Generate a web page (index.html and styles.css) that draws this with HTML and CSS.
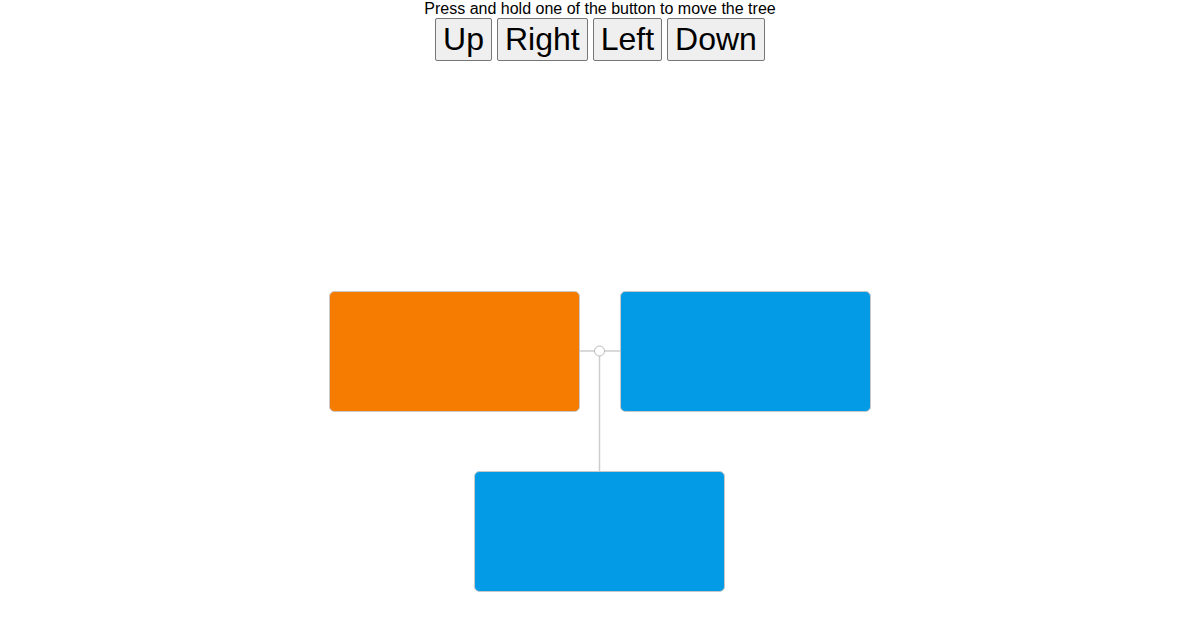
FILE: index.html
```html
<!DOCTYPE html>
<html>
<head>
<meta charset="utf-8">
<link rel="stylesheet" href="styles.css">
</head>
<body>
<div class="controls">
  <div class="hint">Press and hold one of the button to move the tree</div>
  <div class="buttons">
    <button class="btn">Up</button>
    <button class="btn">Right</button>
    <button class="btn">Left</button>
    <button class="btn">Down</button>
  </div>
</div>
<div class="tree">
  <svg class="tree-svg" width="1200" height="569" viewBox="0 61 1200 569">
    <g class="links">
      <line x1="579" y1="351" x2="620" y2="351"/>
      <line x1="599.5" y1="356" x2="599.5" y2="471"/>
      <circle cx="599.5" cy="351" r="5"/>
    </g>
    <rect class="node orange" x="329.5" y="291.5" width="250" height="120" rx="5" ry="5"/>
    <rect class="node blue" x="620.5" y="291.5" width="250" height="120" rx="5" ry="5"/>
    <rect class="node blue" x="474.5" y="471.5" width="250" height="120" rx="5" ry="5"/>
  </svg>
</div>
</body>
</html>
```
FILE: styles.css
```css
html, body {
  margin: 0;
  padding: 0;
  background: #fff;
  font-family: "Liberation Sans", Arial, sans-serif;
}
.controls {
  display: flex;
  flex-direction: column;
  align-items: center;
}
.hint {
  font-size: 16px;
  line-height: 18px;
  color: #000;
}
.buttons {
  display: flex;
  gap: 5px;
}
.btn {
  font-family: "Liberation Sans", Arial, sans-serif;
  font-size: 32px;
  line-height: 37px;
  padding: 2px 7px;
  background: #efefef;
  border: 1px solid #767676;
  border-radius: 2px;
  color: #000;
}
.tree {
  display: block;
}
.tree-svg {
  display: block;
}
.links line {
  stroke: #cccccc;
  stroke-width: 1.5;
}
.links circle {
  fill: #fff;
  stroke: #bbbbbb;
  stroke-width: 1;
}
.node {
  stroke: #c8c8c8;
  stroke-width: 1;
}
.orange { fill: #F57C00; }
.blue { fill: #039BE5; }
```
